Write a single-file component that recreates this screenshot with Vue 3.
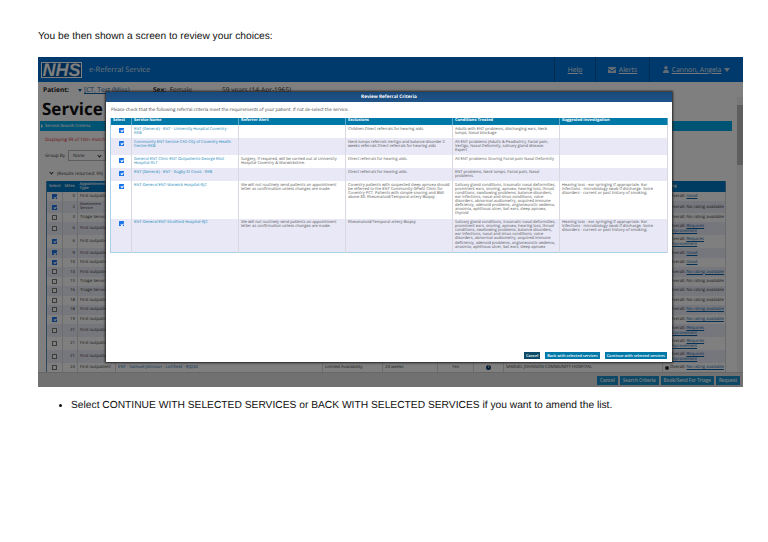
<script setup>
const rows = [
  { sel: true, miles: 0, type: 'First outpatient', rating: 'Good', link: true },
  { sel: true, miles: 2, type: 'Assessment Service', rating: 'No rating available', wrap: true },
  { sel: false, miles: 3, type: 'Triage Service', rating: 'No rating available' },
  { sel: false, miles: 6, type: 'First outpatient', rating: 'Requires\nimprovement', link: true },
  { sel: true, miles: 6, type: 'First outpatient', rating: 'Requires\nimprovement', link: true },
  { sel: true, miles: 9, type: 'First outpatient', rating: 'Good', link: true },
  { sel: true, miles: 10, type: 'First outpatient', rating: 'Good', link: true },
  { sel: false, miles: 14, type: 'First outpatient', rating: 'No rating available', link: true },
  { sel: false, miles: 15, type: 'Triage Service', rating: 'No rating available' },
  { sel: false, miles: 16, type: 'Triage Service', rating: 'No rating available' },
  { sel: false, miles: 18, type: 'First outpatient', rating: 'No rating available' },
  { sel: false, miles: 18, type: 'First outpatient', rating: 'No rating available', link: true },
  { sel: true, miles: 19, type: 'First outpatient', rating: 'No rating available', link: true },
  { sel: false, miles: 21, type: 'First outpatient', rating: 'Requires\nimprovement', link: true },
  { sel: false, miles: 21, type: 'First outpatient', rating: 'Requires\nimprovement', link: true },
  { sel: false, miles: 21, type: 'First outpatient', rating: 'Requires\nimprovement', link: true },
  {
    sel: false, miles: 24, type: 'First outpatient', rating: 'No rating available', link: true,
    service: 'ENT - Samuel Johnson - Lichfield - RJQ34', avail: 'Limited Availability', weeks: '24 weeks',
    yes: 'Yes', info: true, site: 'SAMUEL JOHNSON COMMUNITY HOSPITAL',
  },
]

const investigation = 'Hearing loss - ear syringing if appropriate. Ear\ninfections - microbiology swab if discharge. Voice\ndisorders - current or past history of smoking.'
const noLetter = 'We will not routinely send patients an appointment\nletter as confirmation unless changes are made.'

const criteria = [
  {
    name: 'ENT (General) - ENT - University Hospital Coventry -\nRKB',
    alert: '',
    excl: 'Children Direct referrals for hearing aids.',
    cond: 'Adults with ENT problems, discharging ears, Neck\nlumps, Nasal blockage',
    inv: '',
  },
  {
    name: 'Community ENT Service-CAS-City of Coventry Health\nCentre-RKB',
    alert: '',
    excl: 'Neck lumps referrals Vertigo and balance disorder 2\nweeks referrals Direct referrals for hearing aids',
    cond: 'All ENT problems (Adults & Peadiatric), Facial pain,\nVertigo, Nasal Deformity, salivary gland disease.\nExpert',
    inv: '',
  },
  {
    name: 'General ENT Clinic-ENT Outpatients-George Eliot\nHospital-RLT',
    alert: 'Surgery, if required, will be carried out at University\nHospital Coventry & Warwickshire.',
    excl: 'Direct referrals for hearing aids.',
    cond: 'All ENT problems Snoring Facial pain Nasal Deformity',
    inv: '',
  },
  {
    name: 'ENT (General) - ENT - Rugby St Cross - RKB',
    alert: '',
    excl: 'Direct referrals for hearing aids.',
    cond: 'ENT problems, Neck lumps, Facial pain, Nasal\nproblems.',
    inv: '',
  },
  {
    name: 'ENT-General ENT-Warwick Hospital-RJC',
    alert: noLetter,
    excl: 'Coventry patients with suspected sleep apnoea should\nbe referred to the ENT Community GPwSI Clinic for\nCoventry PCT. Patients with simple snoring and BMI\nabove 30. Rheumatoid/Temporal artery Biopsy',
    cond: 'Salivary gland conditions, traumatic nasal deformities,\nprominent ears, snoring, apnoea, hearing loss, throat\nconditions, swallowing problems, balance disorders,\near infections, nasal and sinus conditions, voice\ndisorders, abnormal audiometry, acquired immune\ndeficiency, adenoid problems, angioneurotic oedema,\nanosmia, aphthous ulcer, bat ears, sleep apnoea,\nthyroid',
    inv: investigation,
  },
  {
    name: 'ENT-General ENT-Stratford Hospital-RJC',
    alert: noLetter,
    excl: 'Rheumatoid/Temporal artery Biopsy',
    cond: 'Salivary gland conditions, traumatic nasal deformities,\nprominent ears, snoring, apnoea, hearing loss, throat\nconditions, swallowing problems, balance disorders,\near infections, nasal and sinus conditions, voice\ndisorders, abnormal audiometry, acquired immune\ndeficiency, adenoid problems, angioneurotic oedema,\nanosmia, aphthous ulcer, bat ears, sleep apnoea',
    inv: investigation,
  },
]
</script>

<template>
  <div class="page">
    <p class="intro">You be then shown a screen to review your choices:</p>

    <div class="frame">
      <header class="topbar">
        <div class="logo">NHS</div>
        <div class="brand">e-Referral Service</div>
        <nav class="nav">
          <a class="nav-item help">Help</a>
          <a class="nav-item alerts">
            <svg width="8" height="6" viewBox="0 0 16 12"><path fill="#c4d4e6" d="M0 0h16v2L8 7 0 2zM0 4l8 5 8-5v8H0z" /></svg>
            Alerts
          </a>
          <a class="nav-item user">
            <svg width="6" height="7" viewBox="0 0 12 14"><circle cx="6" cy="3.5" r="3.5" fill="#c4d4e6" /><path fill="#c4d4e6" d="M0 14c0-5 2-6.500 6-6.500s6 1.500 6 6.500z" /></svg>
            Cannon, Angela
            <svg width="6" height="4" viewBox="0 0 12 8"><path fill="#c4d4e6" d="M0 0h12L6 8z" /></svg>
          </a>
        </nav>
      </header>

      <div class="body">
        <main class="main">
          <div class="patient">
            <b>Patient:</b>
            <span class="pname"><i class="tri"></i><a>[CT, Test (Miss)</a></span>
            <span class="psex"><b>Sex:</b>&nbsp; Female</span>
            <span class="page-age">59 years (14-Apr-1965)</span>
          </div>
          <h1>Service Selection</h1>
          <div class="search-bar"><i class="tri-r"></i>Service Search Criteria</div>
          <div class="showing">Displaying 99 of 100+ matching</div>
          <div class="groupby">
            <span>Group By</span>
            <div class="select">None<i class="chev"></i></div>
          </div>
          <div class="returned"><i class="chev"></i>(Results returned: 99)</div>

          <table class="results">
            <colgroup>
              <col style="width: 16px" /><col style="width: 15px" /><col style="width: 38px" />
              <col style="width: 207px" /><col style="width: 60px" /><col style="width: 55px" />
              <col style="width: 36px" /><col style="width: 30px" /><col style="width: 159px" />
              <col style="width: 63px" />
            </colgroup>
            <thead>
              <tr>
                <th>Select</th><th>Miles</th><th>Appointment Type</th><th>Service</th><th>Availability</th>
                <th>Wait</th><th>Direct</th><th>Info</th><th>Location</th><th>Rating</th>
              </tr>
            </thead>
            <tbody>
              <tr v-for="(r, i) in rows" :key="i">
                <td class="c"><input type="checkbox" :checked="r.sel" /></td>
                <td class="num">{{ r.miles }}</td>
                <td :class="{ squeeze: r.wrap }">{{ r.type }}</td>
                <td class="svc">{{ r.service }}</td>
                <td>{{ r.avail }}</td>
                <td>{{ r.weeks }}</td>
                <td class="c">{{ r.yes }}</td>
                <td class="c"><span v-if="r.info" class="info">i</span></td>
                <td>{{ r.site }}</td>
                <td class="rating">
                  <span class="dot"></span>
                  <span>Overall: <a v-if="r.link">{{ r.rating }}</a><template v-else>{{ r.rating }}</template></span>
                </td>
              </tr>
            </tbody>
          </table>
        </main>
        <div class="scrollbar"><div class="thumb"></div></div>
      </div>

      <footer class="actions">
        <button>Cancel</button>
        <button>Search Criteria</button>
        <button>Book/Send For Triage</button>
        <button>Request</button>
      </footer>

      <div class="backdrop"></div>

      <section class="modal">
        <div class="modal-title">Review Referral Criteria</div>
        <p class="modal-intro">Please check that the following referral criteria meet the requirements of your patient. If not de-select the service.</p>
        <table class="criteria">
          <colgroup>
            <col style="width: 21px" /><col style="width: 107px" /><col style="width: 107px" />
            <col style="width: 107px" /><col style="width: 107px" /><col style="width: 108px" />
          </colgroup>
          <thead>
            <tr>
              <th>Select</th><th>Service Name</th><th>Referrer Alert</th><th>Exclusions</th><th>Conditions Treated</th><th>Suggested Investigation</th>
            </tr>
          </thead>
          <tbody>
            <tr v-for="c in criteria" :key="c.name">
              <td class="c"><input type="checkbox" checked /></td>
              <td class="name">{{ c.name }}</td>
              <td>{{ c.alert }}</td>
              <td>{{ c.excl }}</td>
              <td>{{ c.cond }}</td>
              <td>{{ c.inv }}</td>
            </tr>
          </tbody>
        </table>
        <div class="modal-actions">
          <button class="dark">Cancel</button>
          <button>Back with selected services</button>
          <button>Continue with selected services</button>
        </div>
      </section>
    </div>

    <ul class="notes">
      <li>Select CONTINUE WITH SELECTED SERVICES or BACK WITH SELECTED SERVICES if you want to amend the list.</li>
    </ul>
  </div>
</template>

<style scoped>
.page {
  height: 542px;
  overflow: hidden;
  font-family: "Liberation Sans", Arial, sans-serif;
  background: #fff;
  text-rendering: geometricPrecision;
}
.intro {
  margin: 0;
  padding: 31px 0 0 38px;
  height: 57px;
  box-sizing: border-box;
  font-size: 10.200px;
  line-height: 12px;
  color: #111;
}
.frame {
  position: relative;
  display: flex;
  flex-direction: column;
  margin-left: 38px;
  width: 705px;
  height: 330px;
  overflow: hidden;
  background: #fff;
  font-family: "Open Sans", sans-serif;
  color: #333;
}
.topbar {
  flex: none;
  display: flex;
  align-items: center;
  height: 25px;
  padding-left: 3px;
  background: #0074d8;
  color: #c4d4e6;
}
.logo {
  width: 41px;
  height: 16px;
  box-sizing: border-box;
  border: 1px solid #fff;
  text-align: center;
  font: italic bold 18px/14px "Liberation Sans", sans-serif;
  color: #fff;
  background: #0058a8;
}
.brand {
  margin-left: 7px;
  font-size: 7.500px;
  color: #d8e4f0;
}
.nav {
  display: flex;
  margin-left: auto;
  height: 100%;
  font-size: 6.800px;
}
.nav-item {
  display: flex;
  align-items: center;
  gap: 3px;
  justify-content: center;
  height: 100%;
  border-left: 1px solid #00589f;
  color: #e8eff6;
  text-decoration: underline;
}
.help { width: 40px; }
.alerts { width: 53px; }
.user { width: 93px; }
.nav svg { flex: none; }

.body {
  flex: 1;
  min-height: 0;
  display: flex;
  overflow: hidden;
}
.main {
  flex: 1;
  min-width: 0;
  padding-left: 2px;
}
.patient {
  display: flex;
  align-items: center;
  height: 15px;
  padding-left: 3px;
  font-size: 6.600px;
  color: #222;
}
.pname {
  margin-left: 9px;
  width: 75px;
}
.pname a {
  color: #0b63a8;
  text-decoration: underline;
}
.tri {
  display: inline-block;
  border-top: 3px solid #0b63a8;
  border-left: 2px solid transparent;
  border-right: 2px solid transparent;
  margin-right: 2px;
  vertical-align: middle;
}
.psex { width: 69px; }
h1 {
  margin: 0;
  height: 24px;
  padding-left: 2px;
  font-size: 17px;
  line-height: 24px;
  font-weight: 700;
  color: #111;
}
.search-bar {
  display: flex;
  align-items: center;
  height: 10px;
  margin-right: 5px;
  padding-left: 1px;
  background: #00a8e6;
  color: #fff;
  font-size: 4.200px;
  font-weight: 600;
}
.tri-r {
  border-left: 2px solid #fff;
  border-top: 2px solid transparent;
  border-bottom: 2px solid transparent;
  margin-right: 2px;
}
.showing {
  height: 19px;
  padding-left: 5px;
  line-height: 18px;
  font-size: 4.600px;
  color: #e02020;
}
.groupby {
  display: flex;
  align-items: center;
  height: 11px;
  padding-left: 5px;
  font-size: 4.600px;
}
.select {
  display: flex;
  align-items: center;
  justify-content: space-between;
  box-sizing: border-box;
  width: 38px;
  height: 11px;
  margin-left: 3px;
  padding: 0 4px;
  border: 1px solid #bbb;
  background: #fff;
}
.chev {
  display: inline-block;
  width: 2px;
  height: 2px;
  border-right: 1px solid #333;
  border-bottom: 1px solid #333;
  transform: rotate(45deg);
}
.returned {
  height: 20px;
  padding: 8px 0 0 10px;
  box-sizing: border-box;
  font-size: 4.600px;
  line-height: 10px;
}
.returned .chev { margin: 0 4px 1px 0; }

.results {
  margin-left: 6px;
  width: 679px;
  table-layout: fixed;
  border-collapse: collapse;
  font-size: 4.300px;
  line-height: 4.700px;
  border-left: 1px solid #5a93c0;
  border-right: 1px solid #5a93c0;
}
.results th {
  height: 11px;
  padding: 0 2px;
  background: #0078c4;
  color: #fff;
  text-align: left;
  font-weight: 600;
  font-size: 4px;
  line-height: 4px;
  overflow: hidden;
}
.results td {
  height: 5.900px;
  padding: 1.800px 2px;
  border-right: 1px solid #d8d8d8;
  overflow: hidden;
  vertical-align: middle;
}
.results tbody tr:nth-child(even) { background: #ededfa; }
input {
  appearance: none;
  display: block;
  position: relative;
  box-sizing: border-box;
  width: 5px;
  height: 5px;
  margin: 0 auto;
  border: 0.500px solid #777;
  border-radius: 0.500px;
  background: #fff;
}
input:checked {
  border-color: #1a73e8;
  background: #1a73e8;
}
input:checked::after {
  content: "";
  position: absolute;
  left: 1.400px;
  top: 0.300px;
  width: 1.300px;
  height: 2.400px;
  border-right: 0.800px solid #fff;
  border-bottom: 0.800px solid #fff;
  transform: rotate(45deg);
}
.results .c { text-align: center; }
.results .num { text-align: right; }
.results .squeeze { line-height: 3.800px; font-size: 3.800px; }
.results .svc { color: #0b63a8; }
.info {
  display: inline-block;
  width: 5px;
  height: 5px;
  border-radius: 50%;
  background: #0b3a66;
  color: #fff;
  font-size: 4px;
  line-height: 5px;
  font-weight: 700;
  text-align: center;
}
.rating {
  position: relative;
  padding: 1.800px 0 1.800px 7px !important;
  white-space: pre;
}
.rating a {
  color: #0b63a8;
  text-decoration: underline;
}
.dot {
  position: absolute;
  left: 2px;
  top: 2.500px;
  width: 4px;
  height: 4px;
  border-radius: 50%;
  background: #333;
}

.scrollbar {
  flex: none;
  width: 6px;
  margin-top: 15px;
  background: #f0f0f0;
}
.thumb {
  height: 60px;
  margin-top: 8px;
  background: #bcbcbc;
}
.actions {
  flex: none;
  display: flex;
  justify-content: flex-end;
  align-items: center;
  gap: 2px;
  height: 15px;
  padding-right: 3px;
  background: #e2e2e2;
  border-top: 1px solid #ccc;
  box-sizing: border-box;
}
.actions button {
  flex: none;
  height: 9px;
  padding: 0 3px;
  border: 0;
  background: #1a92cc;
  color: #fff;
  white-space: nowrap;
  font: 600 4.600px "Open Sans", sans-serif;
}

.backdrop {
  position: absolute;
  inset: 0;
  background: rgba(0, 0, 0, 0.5);
}
.modal {
  position: absolute;
  left: 68px;
  top: 35px;
  display: flex;
  flex-direction: column;
  width: 566px;
  height: 270px;
  box-sizing: border-box;
  background: #fff;
  box-shadow: 0 0 2px 1px #222;
}
.modal-title {
  height: 10px;
  background: linear-gradient(#18497d, #205488);
  color: #fff;
  text-align: center;
  font-size: 4.700px;
  line-height: 10px;
  font-weight: 700;
}
.modal-intro {
  margin: 0;
  padding: 6px 0 0 5px;
  height: 16px;
  box-sizing: border-box;
  font-size: 4.500px;
  line-height: 5px;
  color: #444;
}
.criteria {
  margin-left: 4px;
  width: 557px;
  table-layout: fixed;
  border-collapse: collapse;
  font-size: 4px;
  line-height: 4.050px;
  color: #555;
  border-left: 1px solid #a8d0e8;
  border-right: 1px solid #a8d0e8;
  border-bottom: 1px solid #a8d0e8;
}
.criteria th {
  height: 7px;
  padding: 0 2px;
  background: #0079a8;
  color: #fff;
  text-align: left;
  font-weight: 700;
  border-right: 1px solid #5fa8c8;
}
.criteria td {
  padding: 2.500px 2px;
  vertical-align: top;
  white-space: pre;
  border-right: 1px solid #d8d8e0;
}
.criteria tbody tr:nth-child(even) { background: #e8e8f6; }
.criteria .name { color: #1787b8; }
.modal-actions {
  display: flex;
  justify-content: flex-end;
  gap: 5px;
  margin-top: auto;
  padding: 0 5px 3px 0;
}
.modal-actions button {
  flex: none;
  height: 7px;
  padding: 0 2px;
  border: 0;
  background: #0079a8;
  color: #fff;
  white-space: nowrap;
  font: 600 3.850px "Open Sans", sans-serif;
}
.modal-actions .dark { background: #0b4a66; }

.notes {
  margin: 0;
  padding: 13px 0 0 71px;
  font-size: 10.250px;
  line-height: 12px;
  color: #111;
}
</style>

<style>
html, body { background: #fff; }
</style>
